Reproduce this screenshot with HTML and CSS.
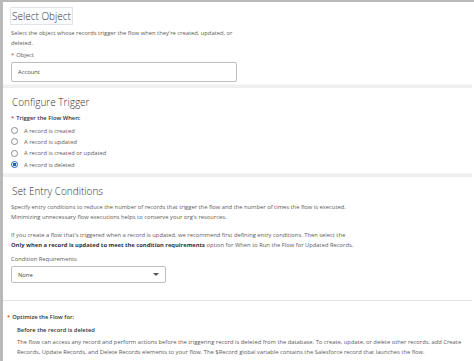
FILE: index.html
```html
<!DOCTYPE html>
<html lang="en">
<head>
   <meta charset="UTF-8">
   <title>Configure Start</title>
   <link rel="stylesheet" href="styles.css">
</head>
<body>
   <div class="frame">

       <!-- Select Object -->
       <section class="panel panel-object">
           <h2 class="panel-title focused">Select Object</h2>
           <p class="help">Select the object whose records trigger the flow when they're created, updated, or<br>deleted.</p>
           <label class="field-label"><span class="req">*</span>Object</label>
           <div class="text-input">Account</div>
       </section>

       <div class="divider"></div>

       <!-- Configure Trigger -->
       <section class="panel panel-trigger">
           <h2 class="panel-title">Configure Trigger</h2>
           <div class="legend"><span class="req">*</span>Trigger the Flow When:</div>
           <ul class="radio-list">
               <li><span class="radio"></span>A record is created</li>
               <li><span class="radio"></span>A record is updated</li>
               <li><span class="radio"></span>A record is created or updated</li>
               <li><span class="radio checked"></span>A record is deleted</li>
           </ul>
       </section>

       <div class="divider"></div>

       <!-- Entry Conditions -->
       <section class="panel panel-entry">
           <h2 class="panel-title">Set Entry Conditions</h2>
           <p class="help">Specify entry conditions to reduce the number of records that trigger the flow and the number of times the flow is executed.<br>Minimizing unnecessary flow executions helps to conserve your org's resources.</p>
           <p class="help">If you create a flow that's triggered when a record is updated, we recommend first defining entry conditions. Then select the<br><b>Only when a record is updated to meet the condition requirements</b> option for When to Run the Flow for Updated Records.</p>
           <label class="field-label">Condition Requirements</label>
           <div class="select-input">None<span class="caret"></span></div>
       </section>

       <div class="rule"></div>

       <!-- Optimize -->
       <section class="panel panel-optimize">
           <div class="legend"><span class="req">*</span>Optimize the Flow for:</div>
           <div class="option-title">Before the record is deleted</div>
           <p class="help">The flow can access any record and perform actions before the triggering record is deleted from the database. To create, update, or delete other records, add Create<br>Records, Update Records, and Delete Records elements to your flow. The $Record global variable contains the Salesforce record that launches the flow.</p>
       </section>

   </div>
</body>
</html>
```

FILE: styles.css
```css
html, body {
    margin: 0;
    padding: 0;
    background: #fff;
}
body {
    font-family: "Open Sans", "Noto Sans", sans-serif;
    font-size: 5.8px;
    color: #5a5a5a;
}
.frame {
    width: 471px;
    height: 359px;
    border-top: 2px solid #b9b9b9;
    border-left: 3px solid #b9b9b9;
    overflow: hidden;
}
.panel {
    padding-left: 8px;
}
.panel-title {
    margin: 0;
    font-weight: 300;
    font-size: 10px;
    line-height: 16px;
    color: #333;
    display: inline-block;
    padding: 0 1px;
}
.focused {
    outline: 1px solid #dfe4ea;
    background: #fbfcfd;
}
.help {
    margin: 0;
    line-height: 9.5px;
    white-space: nowrap;
}
.help b {
    color: #333;
}
.req {
    color: #c23934;
    margin-right: 2px;
}
.field-label {
    display: block;
    line-height: 10px;
}
.text-input, .select-input {
    box-sizing: border-box;
    border: 1px solid #bdbdbd;
    border-radius: 2px;
    padding-left: 6px;
    color: #444;
    display: flex;
    align-items: center;
}

/* select object */
.panel-object {
    padding-top: 6px;
    height: 76px;
}
.panel-object .help {
    margin-top: 4px;
    line-height: 10px;
}
.panel-object .field-label {
    margin-top: 2px;
}
.text-input {
    margin-top: 2px;
    width: 226px;
    height: 20px;
}

.divider {
    height: 3px;
    width: 469px;
    background: #efefef;
    border-top: 1px solid #f6f6f6;
}

/* trigger */
.panel-trigger {
    padding-top: 6px;
    height: 79px;
}
.legend {
    font-weight: 600;
    color: #333;
    line-height: 10px;
    margin-top: 3px;
}
.radio-list {
    list-style: none;
    margin: 2px 0 0;
    padding: 0;
}
.radio-list li {
    display: flex;
    align-items: center;
    height: 11.3px;
}
.radio {
    box-sizing: border-box;
    width: 7px;
    height: 7px;
    border: 1px solid #8c8c8c;
    border-radius: 50%;
    margin-right: 6px;
    background: #fff;
}
.radio.checked {
    border-color: #1b5fc1;
    background: radial-gradient(circle, #1b5fc1 0 1.6px, #fff 2px);
}

/* entry conditions */
.panel-entry {
    padding-top: 6px;
    height: 117px;
}
.panel-entry .help {
    margin-top: 4px;
}
.panel-entry .help + .help {
    margin-top: 9px;
}
.panel-entry .field-label {
    margin-top: 4px;
}
.select-input {
    margin-top: 2px;
    width: 155px;
    height: 17px;
    justify-content: space-between;
    padding-right: 6px;
}
.caret {
    width: 0;
    height: 0;
    border-left: 3px solid transparent;
    border-right: 3px solid transparent;
    border-top: 3px solid #555;
}

.rule {
    height: 1px;
    width: 469px;
    background: #e2e2e2;
}

/* optimize */
.panel-optimize {
    padding-left: 4px;
    padding-top: 8px;
}
.option-title {
    font-weight: 600;
    color: #333;
    line-height: 10px;
    margin: 3px 0 0 10px;
}
.panel-optimize .help {
    margin: 3px 0 0 10px;
}
```
